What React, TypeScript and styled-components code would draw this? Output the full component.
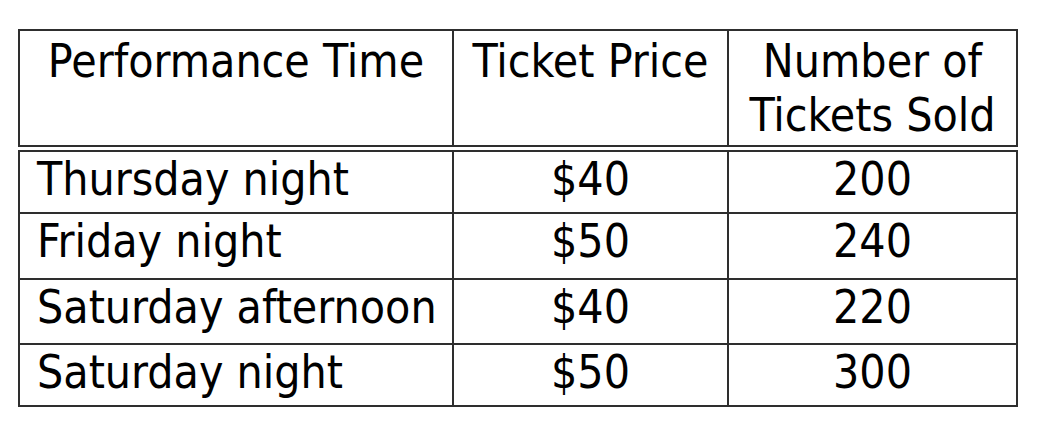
import styled, { createGlobalStyle } from 'styled-components';

interface Performance {
    time: string;
    price: string;
    sold: number;
}

const performances: Performance[] = [
    { time: 'Thursday night', price: '$40', sold: 200 },
    { time: 'Friday night', price: '$50', sold: 240 },
    { time: 'Saturday afternoon', price: '$40', sold: 220 },
    { time: 'Saturday night', price: '$50', sold: 300 },
];

const rowHeights = [64, 66, 65, 62];

function App() {
    return (
        <>
            <GlobalStyle />
            <PageStyle>
                <TableStyle>
                    <colgroup>
                        <col style={{ width: 434 }} />
                        <col style={{ width: 275 }} />
                        <col style={{ width: 289 }} />
                    </colgroup>
                    <thead>
                        <tr>
                            <HeadCell>Performance Time</HeadCell>
                            <HeadCell>Ticket Price</HeadCell>
                            <HeadCell>Number of<br />Tickets Sold</HeadCell>
                        </tr>
                    </thead>
                    <tbody>
                        {
                            performances.map((p, i) => (
                                <BodyRow key={p.time} $height={rowHeights[i]}>
                                    <BodyCell $align="left">{p.time}</BodyCell>
                                    <BodyCell $align="center">{p.price}</BodyCell>
                                    <BodyCell $align="center">{p.sold}</BodyCell>
                                </BodyRow>
                            ))
                        }
                    </tbody>
                </TableStyle>
            </PageStyle>
        </>
    );
}

const GlobalStyle = createGlobalStyle`
    html, body {
        margin: 0;
        padding: 0;
        background: #fff;
    }
`;

const PageStyle = styled.div`
    padding: 29px 0 0 18px;
    font-family: "DejaVu Sans Condensed", "DejaVu Sans", sans-serif;
    font-stretch: condensed;
    font-size: 46px;
    line-height: 54px;
    color: #000;
`;

const TableStyle = styled.table`
    border-collapse: collapse;
    table-layout: fixed;
    width: 1000px;
    border: 2px solid #2e2e2e;
`;

const HeadCell = styled.th`
    font-weight: normal;
    text-align: center;
    vertical-align: top;
    padding: 3px 0 0;
    height: 111px;
    border-left: 2px solid #2e2e2e;
    border-bottom: 7px double #2e2e2e;
`;

interface BodyRowProps {
    $height: number;
}

const BodyRow = styled.tr<BodyRowProps>`
    height: ${({ $height }) => $height}px;
`;

interface BodyCellProps {
    $align: 'left' | 'center';
}

const BodyCell = styled.td<BodyCellProps>`
    text-align: ${({ $align }) => $align};
    vertical-align: top;
    padding: 0 0 0 ${({ $align }) => $align === 'left' ? '17px' : '0'};
    border-left: 2px solid #2e2e2e;
    border-top: 2px solid #2e2e2e;
    white-space: nowrap;
`;

export default App;
